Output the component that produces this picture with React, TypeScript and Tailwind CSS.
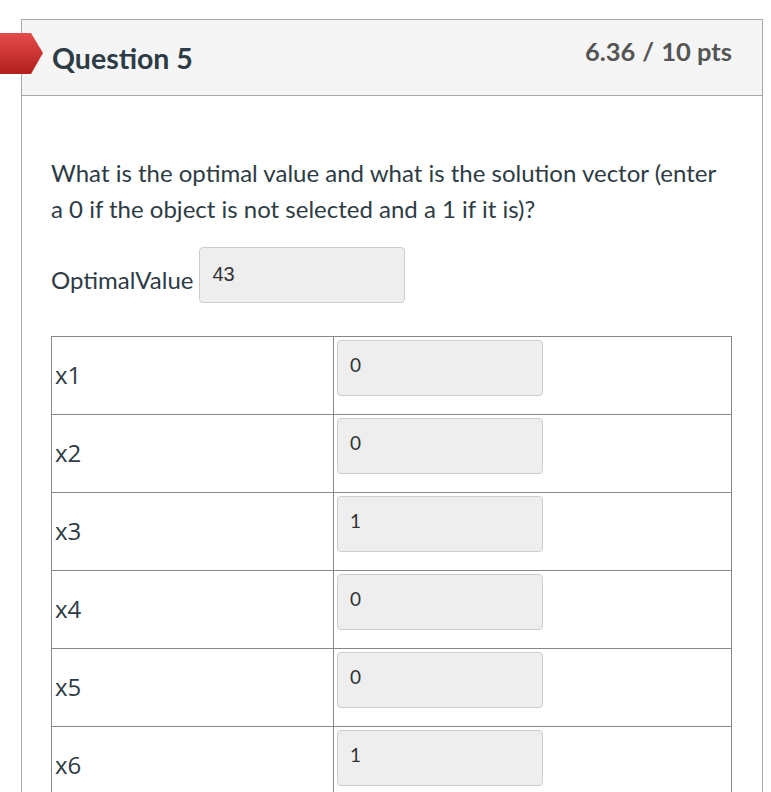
const rows = [
  { label: 'x1', value: '0' },
  { label: 'x2', value: '0' },
  { label: 'x3', value: '1' },
  { label: 'x4', value: '0' },
  { label: 'x5', value: '0' },
  { label: 'x6', value: '1' },
];

const lato = { fontFamily: 'Lato, "Noto Sans", sans-serif' };
const arial = { fontFamily: '"Liberation Sans", Arial, sans-serif' };
const openSans = { fontFamily: '"Open Sans", "Liberation Sans", sans-serif' };

export default function App() {
  return (
    <div className="relative min-h-[792px] w-[771px] overflow-hidden bg-white pt-[19px] text-[#2d3b45]" style={lato}>
      {/* red marker flag */}
      <div className="absolute left-0 top-[33px] h-[41px] w-[44px]">
        <svg width="44" height="41" viewBox="0 0 44 41">
          <defs>
            <linearGradient id="flag" x1="0" y1="0" x2="0" y2="1">
              <stop offset="0" stopColor="#e44c4c" />
              <stop offset="1" stopColor="#b31e1e" />
            </linearGradient>
          </defs>
          <path d="M0 0 H31 L43 20 L31 41 H0 Z" fill="url(#flag)" />
        </svg>
      </div>

      <div className="ml-[21px] w-[742px] border border-[#aaaaaa]">
        <div className="flex h-[76px] items-start justify-between border-b border-[#aaaaaa] bg-[#f5f5f5] pl-[30px] pr-[30px]">
          <h2 className="mt-[22px] text-[28.5px] font-bold leading-[32px] text-[#2d3b45]">Question 5</h2>
          <div className="mt-[16px] flex text-[25.5px] font-bold leading-[30px] text-[#555555]">
            <span>6.36</span>
            <span className="mx-[7px]">/</span>
            <span>10 pts</span>
          </div>
        </div>

        <div className="pb-10 pl-[29px] pr-[30px] pt-[59px]">
          <p className="text-[24px] leading-[36px]">
            What is the optimal value and what is the solution vector (enter a 0 if the object is not selected and a 1 if it is)?
          </p>

          <div className="mt-[20px] flex items-start">
            <span className="mr-[6px] mt-[15px] text-[24px] leading-[36px]">OptimalValue</span>
            <div
              className="h-[56px] w-[206px] rounded border border-[#cccccc] bg-[#eeeeee] px-[12px] pt-[14px] text-[20px] leading-[24px] text-[#333333]"
              style={arial}
            >
              43
            </div>
          </div>

          <div className="mt-[33px] w-[681px] border-l border-t border-[#888888]">
            {rows.map(row => (
              <div key={row.label} className="flex h-[78px] border-b border-[#888888]">
                <div
                  className="flex w-[282px] items-center border-r border-[#888888] pb-[2px] pl-[3px] text-[24px] text-[#2d3b45]"
                  style={openSans}
                >
                  {row.label}
                </div>
                <div className="w-[398px] border-r border-[#888888] pl-[3px] pt-[3px]">
                  <div className="h-[56px] w-[206px] rounded border border-[#cccccc] bg-[#eeeeee] px-[12px] pt-[13px] text-[19px] leading-[22px] text-[#333333]">
                    {row.value}
                  </div>
                </div>
              </div>
            ))}
          </div>
        </div>
      </div>
    </div>
  );
}
